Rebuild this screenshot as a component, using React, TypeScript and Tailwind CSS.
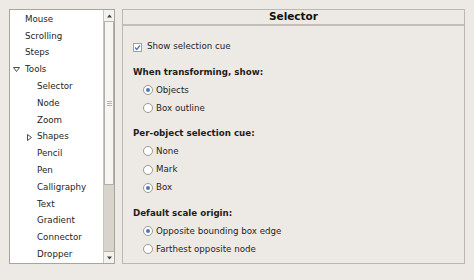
const font = { fontFamily: '"DejaVu Sans", "Liberation Sans", sans-serif' }

type TreeItem = { label: string; depth: number; toggle?: 'open' | 'closed' }

const treeItems: TreeItem[] = [
  { label: 'Mouse', depth: 0 },
  { label: 'Scrolling', depth: 0 },
  { label: 'Steps', depth: 0 },
  { label: 'Tools', depth: 0, toggle: 'open' },
  { label: 'Selector', depth: 1 },
  { label: 'Node', depth: 1 },
  { label: 'Zoom', depth: 1 },
  { label: 'Shapes', depth: 1, toggle: 'closed' },
  { label: 'Pencil', depth: 1 },
  { label: 'Pen', depth: 1 },
  { label: 'Calligraphy', depth: 1 },
  { label: 'Text', depth: 1 },
  { label: 'Gradient', depth: 1 },
  { label: 'Connector', depth: 1 },
  { label: 'Dropper', depth: 1 },
]

function Expander({ open }: { open: boolean }) {
  return (
    <svg width="7" height="7" viewBox="0 0 7 7" className="shrink-0">
      {open ? (
        <path d="M0.5 1.5 L6.5 1.5 L3.5 5.5 Z" fill="none" stroke="#3a3a3a" strokeWidth="0.9" />
      ) : (
        <path d="M1.5 0.5 L5.5 3.5 L1.5 6.5 Z" fill="none" stroke="#3a3a3a" strokeWidth="0.9" />
      )}
    </svg>
  )
}

function Scrollbar() {
  return (
    <div className="w-[11px] h-full flex flex-col border-l border-[#c9c5be] bg-[#d8d4cc]">
      <div className="h-[12px] flex items-center justify-center bg-[#f4f2ef] border-b border-[#b9b5ae]">
        <svg width="5" height="4" viewBox="0 0 5 4">
          <path d="M0 3.5 L2.5 0.5 L5 3.5 Z" fill="#444" />
        </svg>
      </div>
      <div className="h-[163px] bg-[#f6f5f3] border-x border-b border-[#b3afa8] flex items-center justify-center">
        <div className="flex flex-col gap-[1px]">
          <div className="w-[5px] h-px bg-[#b9b5ae]" />
          <div className="w-[5px] h-px bg-[#b9b5ae]" />
          <div className="w-[5px] h-px bg-[#b9b5ae]" />
        </div>
      </div>
      <div className="flex-1" />
      <div className="h-[12px] flex items-center justify-center bg-[#f4f2ef] border-t border-[#b9b5ae]">
        <svg width="5" height="4" viewBox="0 0 5 4">
          <path d="M0 0.5 L2.5 3.5 L5 0.5 Z" fill="#444" />
        </svg>
      </div>
    </div>
  )
}

function Radio({ checked, label }: { checked?: boolean; label: string }) {
  return (
    <div className="h-[18.2px] flex items-center pl-[10px] gap-[3px]">
      <div className="w-[10px] h-[10px] rounded-full border border-[#9c9891] bg-white flex items-center justify-center">
        {checked && <div className="w-[4px] h-[4px] rounded-full bg-[#4a79b5]" />}
      </div>
      <span>{label}</span>
    </div>
  )
}

function Heading({ children }: { children: string }) {
  return <div className="h-[17px] mt-[8px] flex items-center font-bold">{children}</div>
}

export default function App() {
  return (
    <div
      className="w-[474px] h-[280px] bg-[#edeae5] flex gap-[7px] pl-[9px] pt-[9px] text-[8.7px] text-[#1e1e1e]"
      style={font}
    >
      {/* Category tree */}
      <div className="w-[106px] h-[255px] border border-[#a9a59e] bg-white flex">
        <div className="flex-1 flex flex-col pt-[1px]">
          {treeItems.map((item) => (
            <div
              key={item.label}
              className={`h-[16.9px] flex items-center ${item.depth === 0 ? 'pl-[15px]' : 'pl-[27px]'} relative`}
            >
              {item.toggle && (
                <span
                  className={`absolute top-[5px] ${item.depth === 0 ? 'left-[3px]' : 'left-[16px]'}`}
                >
                  <Expander open={item.toggle === 'open'} />
                </span>
              )}
              {item.label}
            </div>
          ))}
        </div>
        <Scrollbar />
      </div>

      {/* Selector page */}
      <div className="w-[343px] h-[255px] border border-[#bcb8b1] flex flex-col">
        <div className="h-[16px] border-b-2 border-[#c3bfb8] flex items-center justify-center text-[10.5px] font-bold text-[#111]">
          Selector
        </div>
        <div className="flex flex-col pl-[10px] pt-[12px]">
          <div className="h-[18px] flex items-center gap-[5px]">
            <div className="w-[9px] h-[9px] border border-[#a4a09a] bg-white flex items-center justify-center">
              <svg width="7" height="7" viewBox="0 0 7 7">
                <path d="M1 3.6 L2.8 5.4 L6 1.4" fill="none" stroke="#4a79b5" strokeWidth="1.4" />
              </svg>
            </div>
            <span>Show selection cue</span>
          </div>

          <Heading>When transforming, show:</Heading>
          <Radio checked label="Objects" />
          <Radio label="Box outline" />

          <Heading>Per-object selection cue:</Heading>
          <Radio label="None" />
          <Radio label="Mark" />
          <Radio checked label="Box" />

          <Heading>Default scale origin:</Heading>
          <Radio checked label="Opposite bounding box edge" />
          <Radio label="Farthest opposite node" />
        </div>
      </div>
    </div>
  )
}
